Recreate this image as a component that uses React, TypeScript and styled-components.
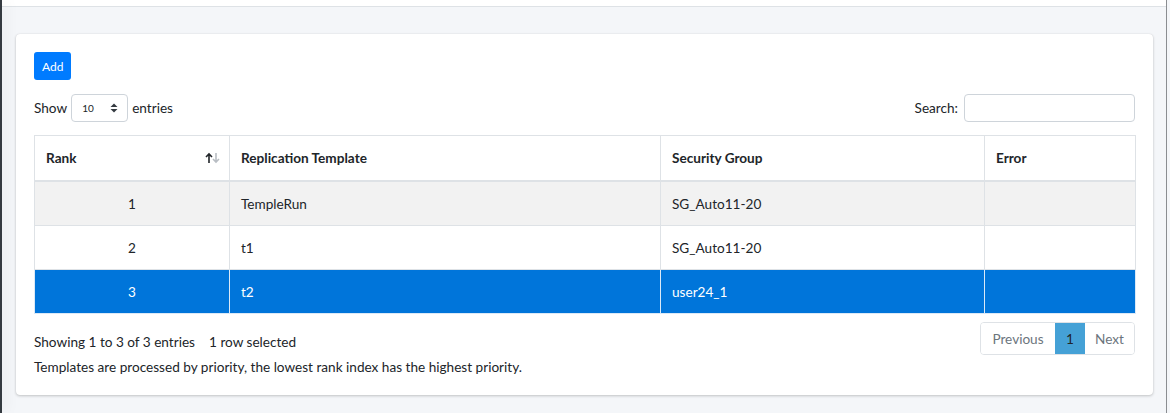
import React from 'react';
import styled, { createGlobalStyle } from 'styled-components';

const GlobalStyle = createGlobalStyle`
  html, body {
    margin: 0;
    padding: 0;
    background: #f4f6f9;
  }
  body {
    font-family: 'Lato', 'Noto Sans', sans-serif;
    font-size: 13.6px;
    color: #212529;
  }
`;

type Row = {
  rank: number;
  template: string;
  group: string;
  error: string;
};

const ROWS: Row[] = [
  { rank: 1, template: 'TempleRun', group: 'SG_Auto11-20', error: '' },
  { rank: 2, template: 't1', group: 'SG_Auto11-20', error: '' },
  { rank: 3, template: 't2', group: 'user24_1', error: '' }
];

const COLUMNS = [
  { title: 'Rank', width: 195 },
  { title: 'Replication Template', width: 431 },
  { title: 'Security Group', width: 324 },
  { title: 'Error', width: 151 }
];

const SELECTED = 3;

const Page = styled.div`
  display: flex;
  height: 413px;
  overflow: hidden;
`;

const Sidebar = styled.div`
  width: 2px;
  flex: none;
  background: #343a40;
  box-shadow: 2px 0 14px rgba(0, 0, 0, 0.18);
  z-index: 1;
`;

const Main = styled.div`
  flex: 1;
  display: flex;
  flex-direction: column;
  min-width: 0;
`;

const TopBar = styled.div`
  height: 6px;
  background: #fff;
  border-bottom: 1px solid #dee2e6;
`;

const Content = styled.div`
  padding: 27px 0 0 14px;
  display: flex;
`;

const Card = styled.div`
  width: 1137px;
  background: #fff;
  border-radius: 4px;
  box-shadow: 0 0 1px rgba(0, 0, 0, 0.13), 0 1px 3px rgba(0, 0, 0, 0.2);
  padding: 18px 18px 20px 18px;
  box-sizing: border-box;
`;

const RightEdge = styled.div`
  width: 3px;
  flex: none;
  background: #f4f6f9;
  border-left: 1px solid #8a8d91;
`;

const AddButton = styled.button`
  height: 28px;
  padding: 0 8px;
  border: none;
  border-radius: 3px;
  background: #007bff;
  color: #fff;
  font-family: inherit;
  font-size: 12px;
  cursor: pointer;
`;

const Controls = styled.div`
  display: flex;
  justify-content: space-between;
  align-items: center;
  margin-top: 14px;
  height: 28px;
`;

const Label = styled.label`
  display: flex;
  align-items: center;
  gap: 4px;
`;

const SelectBox = styled.div`
  width: 57px;
  height: 28px;
  box-sizing: border-box;
  border: 1px solid #ced4da;
  border-radius: 4px;
  display: flex;
  align-items: center;
  justify-content: space-between;
  padding: 0 9px 0 10px;
  font-size: 10px;
`;

const SearchInput = styled.input`
  width: 171px;
  height: 28px;
  box-sizing: border-box;
  border: 1px solid #ced4da;
  border-radius: 4px;
  margin-left: 2px;
`;

const Table = styled.table`
  width: 1101px;
  table-layout: fixed;
  margin-top: 13px;
  border-collapse: collapse;
  border: 1px solid #dee2e6;
`;

const Th = styled.th`
  height: 44px;
  padding: 0 11px;
  text-align: left;
  font-weight: 700;
  border: 1px solid #dee2e6;
  border-bottom: 2px solid #dee2e6;
  position: relative;
`;

const Tr = styled.tr<{ $bg: string; $selected: boolean }>`
  background: ${p => p.$bg};
  color: ${p => (p.$selected ? '#fff' : '#212529')};
  td {
    border-color: ${p => (p.$selected ? '#dbe9f7' : '#dee2e6')};
  }
`;

const Td = styled.td<{ $center?: boolean }>`
  height: 43px;
  padding: 0 11px;
  border: 1px solid #dee2e6;
  text-align: ${p => (p.$center ? 'center' : 'left')};
`;

const SortIcon = styled.span`
  position: absolute;
  right: 8px;
  top: 16px;
  display: flex;
`;

const Footer = styled.div`
  display: flex;
  justify-content: space-between;
  align-items: flex-start;
  margin-top: 8px;
`;

const Info = styled.div`
  padding-top: 12px;
  display: flex;
  gap: 14px;
`;

const Pagination = styled.div`
  display: flex;
  height: 33px;
  border: 1px solid #dee2e6;
  border-radius: 4px;
  overflow: hidden;
  box-sizing: border-box;
`;

const PageItem = styled.span<{ $active?: boolean; $w: number }>`
  width: ${p => p.$w}px;
  display: flex;
  align-items: center;
  justify-content: center;
  color: ${p => (p.$active ? '#212529' : '#6c757d')};
  background: ${p => (p.$active ? '#45a1d6' : '#fff')};
`;

const Note = styled.div`
  margin-top: 4px;
`;

const SortArrows = () => (
  <SortIcon>
    <svg width="16" height="12" viewBox="0 0 16 12">
      <path d="M4 11V2M1 5l3-3 3 3" stroke="#212529" strokeWidth="1.6" fill="none" />
      <path d="M11 1v9M8 7l3 3 3-3" stroke="#b9bec4" strokeWidth="1.6" fill="none" />
    </svg>
  </SortIcon>
);

const Caret = () => (
  <svg width="8" height="12" viewBox="0 0 8 12">
    <path d="M0.5 5L4 1.5 7.5 5z" fill="#343a40" />
    <path d="M0.5 7L4 10.5 7.5 7z" fill="#343a40" />
  </svg>
);

const rowBg = (i: number, selected: boolean) =>
  selected ? '#0075da' : i % 2 === 0 ? '#f2f2f2' : '#fff';

const App: React.FC = () => (
  <>
    <GlobalStyle />
    <Page>
      <Sidebar />
      <Main>
        <TopBar />
        <Content>
          <Card>
            <AddButton>Add</AddButton>
            <Controls>
              <Label>
                Show
                <SelectBox>
                  10
                  <Caret />
                </SelectBox>
                entries
              </Label>
              <Label>
                Search:
                <SearchInput type="search" />
              </Label>
            </Controls>
            <Table>
              <colgroup>
                {COLUMNS.map(c => (
                  <col key={c.title} style={{ width: c.width }} />
                ))}
              </colgroup>
              <thead>
                <tr>
                  {COLUMNS.map((c, i) => (
                    <Th key={c.title}>
                      {c.title}
                      {i === 0 && <SortArrows />}
                    </Th>
                  ))}
                </tr>
              </thead>
              <tbody>
                {ROWS.map((r, i) => {
                  const selected = r.rank === SELECTED;
                  return (
                    <Tr key={r.rank} $bg={rowBg(i, selected)} $selected={selected}>
                      <Td $center>{r.rank}</Td>
                      <Td>{r.template}</Td>
                      <Td>{r.group}</Td>
                      <Td>{r.error}</Td>
                    </Tr>
                  );
                })}
              </tbody>
            </Table>
            <Footer>
              <Info>
                <span>Showing 1 to 3 of 3 entries</span>
                <span>1 row selected</span>
              </Info>
              <Pagination>
                <PageItem $w={74}>Previous</PageItem>
                <PageItem $w={30} $active>
                  1
                </PageItem>
                <PageItem $w={49}>Next</PageItem>
              </Pagination>
            </Footer>
            <Note>
              Templates are processed by priority, the lowest rank index has the
              highest priority.
            </Note>
          </Card>
        </Content>
      </Main>
      <RightEdge />
    </Page>
  </>
);

export default App;
